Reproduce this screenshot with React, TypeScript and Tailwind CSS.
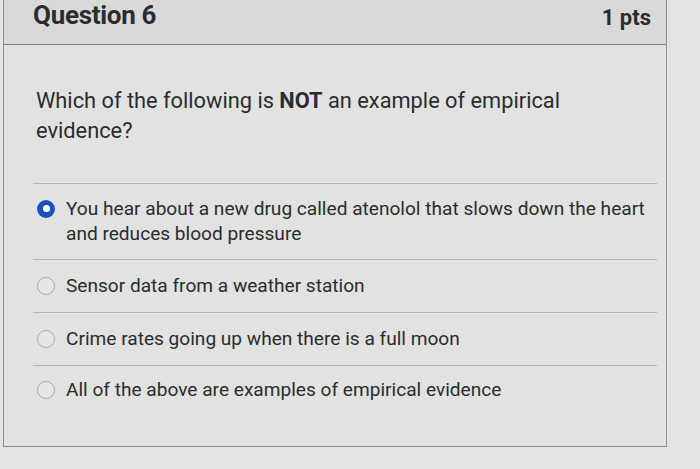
import React from 'react';

const options = [
  'You hear about a new drug called atenolol that slows down the heart and reduces blood pressure',
  'Sensor data from a weather station',
  'Crime rates going up when there is a full moon',
  'All of the above are examples of empirical evidence',
];

const App: React.FC = () => {
  const selected = 0;

  return (
    <div
      className="w-[700px] h-[469px] bg-[#e4e5e3] overflow-hidden text-[#2a2c30]"
      style={{ fontFamily: 'Roboto, "Noto Sans", sans-serif' }}
    >
      <div className="w-[664px] ml-[3px] h-[447px] border-l border-r border-b border-[#8f9190] bg-[#e2e3e1] flex flex-col">
        {/* Header */}
        <div className="h-[45px] bg-[#d9dad8] border-b border-[#7d7f7e] flex items-start justify-between pl-[29px] pr-[15px]">
          <h2 className="text-[26px] font-bold leading-[30px] tracking-[-0.3px]">Question 6</h2>
          <span className="text-[22px] font-bold leading-[30px] mt-[3px]">1 pts</span>
        </div>

        {/* Body */}
        <div className="pl-[29px] pr-[9px] pt-[41px]">
          <p className="text-[21.8px] leading-[30px] pl-[3px] w-[580px]">
            Which of the following is <strong className="font-bold">NOT</strong> an example of empirical evidence?
          </p>

          <div className="mt-[37px] border-t border-[#b3b5b4]">
            {options.map((opt, i) => (
              <div
                key={i}
                className={`flex items-start gap-[11px] pl-[4px] ${
                  i === 0 ? 'pt-[12px] pb-[13px]' : i === options.length - 1 ? 'pt-[11px] pb-[14px]' : 'pt-[13px] pb-[14px]'
                } ${i === options.length - 1 ? '' : 'border-b border-[#b3b5b4]'}`}
              >
                <div className="w-[18px] h-[25px] flex items-center justify-center shrink-0">
                  {i === selected ? (
                    <span className="w-[18px] h-[18px] rounded-full bg-[#1a52b8] flex items-center justify-center">
                      <span className="w-[7px] h-[7px] rounded-full bg-white" />
                    </span>
                  ) : (
                    <span className="w-[18px] h-[18px] rounded-full border-[1.5px] border-[#a9abaa] bg-[#e6e7e5]" />
                  )}
                </div>
                <span className="text-[19.1px] leading-[25px] pr-[6px]">{opt}</span>
              </div>
            ))}
          </div>
        </div>
      </div>
    </div>
  );
};

export default App;
